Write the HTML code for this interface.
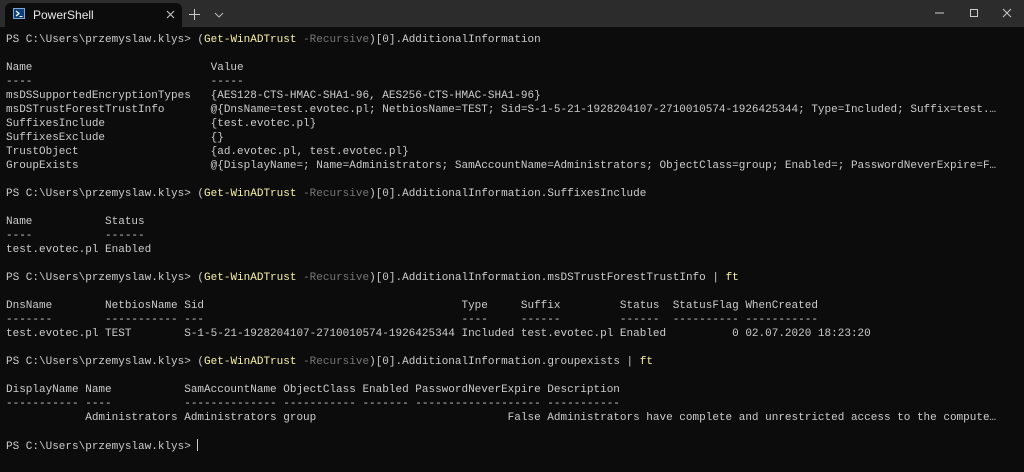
<!DOCTYPE html>
<html><head><meta charset="utf-8"><style>
html,body{margin:0;padding:0;width:1024px;height:472px;overflow:hidden;background:#0c0c0c}
.bar{position:absolute;left:0;top:0;width:1024px;height:27px;background:#2c2c2c}
.tab{position:absolute;left:5px;top:3px;width:177px;height:24px;background:#0c0c0c;border-radius:6px 6px 0 0}
.t{position:absolute;font-family:"Liberation Sans",sans-serif;color:#e8e8e8;font-size:12px}
pre{position:absolute;left:6px;top:33px;margin:0;font-family:"Liberation Mono",monospace;font-size:11px;line-height:14px;color:#cccccc;width:1010px;overflow:hidden;white-space:pre}
.y{color:#f9f1a5}.g{color:#767676}
.cur{display:inline-block;width:1px;height:12px;background:#ccc;vertical-align:-2px}
</style></head><body>
<div class="bar"></div>
<div class="tab"></div>
<svg style="position:absolute;left:13px;top:8px" width="12" height="11" viewBox="0 0 12 11"><rect x="0.5" y="0.5" width="11" height="10" fill="#0c3f7a" stroke="#7fa7d6" stroke-width="1"/><path d="M3 3l3 2.5-3 2.5" stroke="#fff" fill="none" stroke-width="1.2"/><path d="M6.5 8.5h3" stroke="#fff" stroke-width="1"/></svg>
<div class="t" style="left:33px;top:8px">PowerShell</div>
<svg style="position:absolute;left:166px;top:10px" width="9" height="9"><path d="M1 1l7 7M8 1l-7 7" stroke="#ccc" stroke-width="1"/></svg>
<svg style="position:absolute;left:189px;top:9px" width="11" height="11"><path d="M5.5 0v11M0 5.5h11" stroke="#ccc" stroke-width="1"/></svg>
<svg style="position:absolute;left:214px;top:12px" width="10" height="6"><path d="M1 1l4 4 4-4" stroke="#bbb" fill="none" stroke-width="1"/></svg>
<svg style="position:absolute;left:935px;top:12px" width="10" height="2"><path d="M0 1h9" stroke="#ccc" stroke-width="1"/></svg>
<svg style="position:absolute;left:969px;top:8px" width="10" height="10"><rect x="1.5" y="1.5" width="7" height="7" fill="none" stroke="#ccc" stroke-width="1"/></svg>
<svg style="position:absolute;left:1002px;top:8px" width="10" height="10"><path d="M1 1l8 8M9 1l-8 8" stroke="#ccc" stroke-width="1"/></svg>
<pre>PS C:\Users\przemyslaw.klys&gt; (<span class="y">Get-WinADTrust</span> <span class="g">-Recursive</span>)[0].AdditionalInformation

Name                           Value
----                           -----
msDSSupportedEncryptionTypes   {AES128-CTS-HMAC-SHA1-96, AES256-CTS-HMAC-SHA1-96}
msDSTrustForestTrustInfo       @{DnsName=test.evotec.pl; NetbiosName=TEST; Sid=S-1-5-21-1928204107-2710010574-1926425344; Type=Included; Suffix=test.…
SuffixesInclude                {test.evotec.pl}
SuffixesExclude                {}
TrustObject                    {ad.evotec.pl, test.evotec.pl}
GroupExists                    @{DisplayName=; Name=Administrators; SamAccountName=Administrators; ObjectClass=group; Enabled=; PasswordNeverExpire=F…

PS C:\Users\przemyslaw.klys&gt; (<span class="y">Get-WinADTrust</span> <span class="g">-Recursive</span>)[0].AdditionalInformation.SuffixesInclude

Name           Status
----           ------
test.evotec.pl Enabled

PS C:\Users\przemyslaw.klys&gt; (<span class="y">Get-WinADTrust</span> <span class="g">-Recursive</span>)[0].AdditionalInformation.msDSTrustForestTrustInfo | <span class="y">ft</span>

DnsName        NetbiosName Sid                                       Type     Suffix         Status  StatusFlag WhenCreated
-------        ----------- ---                                       ----     ------         ------  ---------- -----------
test.evotec.pl TEST        S-1-5-21-1928204107-2710010574-1926425344 Included test.evotec.pl Enabled          0 02.07.2020 18:23:20

PS C:\Users\przemyslaw.klys&gt; (<span class="y">Get-WinADTrust</span> <span class="g">-Recursive</span>)[0].AdditionalInformation.groupexists | <span class="y">ft</span>

DisplayName Name           SamAccountName ObjectClass Enabled PasswordNeverExpire Description
----------- ----           -------------- ----------- ------- ------------------- -----------
            Administrators Administrators group                             False Administrators have complete and unrestricted access to the compute…

PS C:\Users\przemyslaw.klys&gt; <span class="cur"></span></pre>
</body></html>
